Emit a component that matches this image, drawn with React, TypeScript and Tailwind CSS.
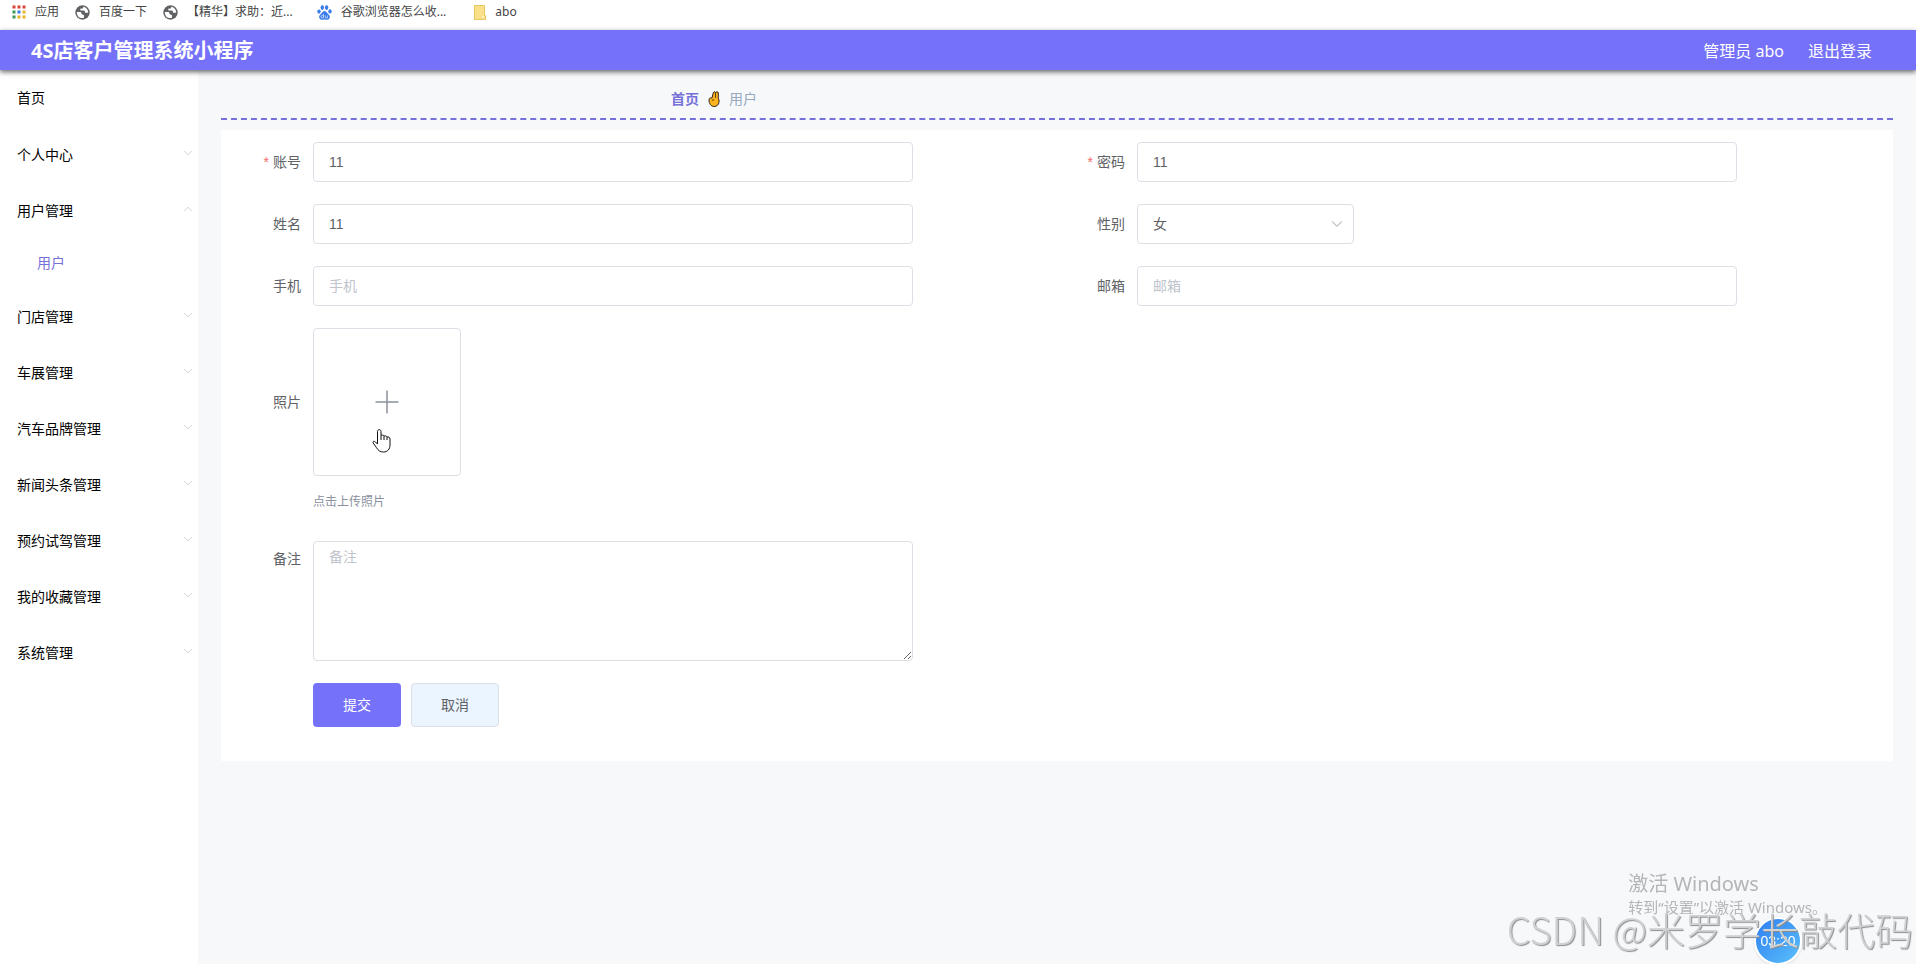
import { useState } from 'react';
import { ChevronDown, ChevronUp } from 'lucide-react';

const bookmarkText = 'ml-[9px] text-xs whitespace-nowrap';

const menu = [
  { name: '个人中心' },
  { name: '用户管理', children: ['用户'] },
  { name: '门店管理' },
  { name: '车展管理' },
  { name: '汽车品牌管理' },
  { name: '新闻头条管理' },
  { name: '预约试驾管理' },
  { name: '我的收藏管理' },
  { name: '系统管理' },
];

const appColors = ['#d9453b', '#d9453b', '#d9453b', '#3c9a55', '#3b7de0', '#e8b424', '#3c9a55', '#e8b424', '#e8b424'];

function AppsIcon() {
  return (
    <svg className="size-[14px]" viewBox="0 0 14 14">
      {appColors.map((color, i) => (
        <rect key={i} x={(i % 3) * 5 + 0.5} y={Math.floor(i / 3) * 5 + 0.5} width="3" height="3" fill={color} />
      ))}
    </svg>
  );
}

function GlobeIcon() {
  return (
    <svg className="size-[15px]" viewBox="0 0 15 15">
      <circle cx="7.5" cy="7.5" r="7.2" fill="#5f6165" />
      <path
        d="M1.800 7h3c1.300 0 1.700.7 1.700 1.600 0 .8.600 1.100 1.400 1.100.900 0 1.100.600 1.100 1.300v1.800c-3.600 1.200-7.400-1.300-7.200-5.800zM8.200 1.800v.900c0 .600-.400.900-1 .900H6.100c-.600 0-.900.400-.900.900 0 .700.400 1 1 1h2.300c.900 0 1.300.500 1.300 1.200 0 .800.500 1.100 1.200 1.100h2.200c0-3.300-2.200-5.600-4.800-6z"
        fill="#fff"
      />
    </svg>
  );
}

function PawIcon() {
  return (
    <svg className="size-[15px]" viewBox="0 0 15 15" fill="#3a7be8">
      <ellipse cx="2" cy="6.600" rx="1.700" ry="2.100" />
      <ellipse cx="5.300" cy="2.600" rx="1.700" ry="2.300" />
      <ellipse cx="9.600" cy="2.600" rx="1.700" ry="2.300" />
      <ellipse cx="13" cy="6.400" rx="1.700" ry="2.100" />
      <path d="M7.500 6c1.500 0 2.200 1.500 3.400 2.700 1.400 1.400 2.400 2.700 1.800 4.200-.600 1.800-2.600 1.900-5.200 1.700-2.600.200-4.600.100-5.200-1.700-.600-1.500.400-2.800 1.800-4.200C5.300 7.500 6 6 7.500 6z" />
      <path
        d="M6.500 9v4H5.200a1.200 1.200 0 0 1 0-2.400h1.300M8.300 10.500v1.700c0 .600.300.800.800.800h1.300v-2.500"
        fill="none"
        stroke="#fff"
        strokeWidth=".6"
      />
    </svg>
  );
}

function FolderIcon() {
  return (
    <svg className="h-[15px] w-3" viewBox="0 0 12 15">
      <path d="M.5.500h10v10h1v4H.5z" fill="#fbe08a" stroke="#e9c65c" />
      <path d="M8.500 13.500v-2h2" fill="none" stroke="#fdf1c4" />
    </svg>
  );
}

function VictoryIcon() {
  return (
    <svg className="h-4 w-3" viewBox="0 0 12 16">
      <path
        d="M1 8.500C1 7.200 2.400 6.600 4 7L5.300 1.800C5.600.400 7.400.500 7.500 1.900 8 .300 10.300.400 10.300 2v5.300c.700 1 .9 2.300.7 3.800-.300 2.700-2.200 4.400-4.900 4.400S1 13.200 1 8.500z"
        fill="#fbb41f"
        stroke="#2f2418"
      />
      <path d="M3.800 9.300l2.400-.5M7.500 2v4.800" fill="none" stroke="#2f2418" strokeWidth=".8" />
    </svg>
  );
}

function HandCursor() {
  return (
    <svg className="h-6 w-[19px]" viewBox="0 0 19 24">
      <path
        d="M5.500 15V2.500C5.500 0 9 0 9 2.500V6.500c1-.900 2.800-.500 3 .700 1-.700 2.700-.300 3 .900 1.500-.600 3 .200 3 1.900v6c0 4-2.500 7-6.500 7-3.500 0-5.200-1.500-7-4.300L1.200 14C.300 12.400 2.200 11.700 3.500 13z"
        fill="#fff"
        stroke="#111"
        strokeLinejoin="round"
      />
      <path d="M9 6.500V11M12 7.200V11M15 8.200V11" stroke="#111" fill="none" />
    </svg>
  );
}

const inputClass =
  'h-10 w-full max-w-[600px] rounded border border-[#dcdfe6] bg-white px-[15px] text-sm text-[#606266] outline-none placeholder:text-[#c0c4cc]';

type FieldProps = {
  id: string;
  label: string;
  required?: boolean;
  value?: string;
};

function Label({ id, label, required }: FieldProps) {
  return (
    <label htmlFor={id} className="w-20 shrink-0 pr-3 text-right text-sm leading-10 text-[#606266]">
      {required && <span className="mr-1 text-[#f56c6c]">*</span>}
      {label}
    </label>
  );
}

function TextField(props: FieldProps) {
  const [value, setValue] = useState(props.value || '');

  return (
    <div className="flex">
      <Label {...props} />
      <input
        id={props.id}
        className={inputClass}
        placeholder={props.label}
        value={value}
        onChange={e => setValue(e.target.value)}
      />
    </div>
  );
}

export default function App() {
  return (
    <div className="flex min-h-screen flex-col bg-[#f6f8fa] font-['Liberation_Sans','Noto_Sans_CJK_SC',sans-serif]">
      <nav className="flex h-[30px] items-start bg-white pt-1 pl-3 font-['Noto_Sans','Noto_Sans_CJK_SC',sans-serif] text-[#444]">
        <a href="#" className="mr-4 flex items-center">
          <AppsIcon />
          <span className={bookmarkText}>应用</span>
        </a>
        <a href="#" className="mr-4 flex items-center">
          <GlobeIcon />
          <span className={bookmarkText}>百度一下</span>
        </a>
        <a href="#" className="mr-6 flex items-center">
          <GlobeIcon />
          <span className={bookmarkText}>【精华】求助：近...</span>
        </a>
        <a href="#" className="mr-7 flex items-center">
          <PawIcon />
          <span className={bookmarkText}>谷歌浏览器怎么收...</span>
        </a>
        <a href="#" className="flex items-center">
          <FolderIcon />
          <span className={bookmarkText}>abo</span>
        </a>
      </nav>

      <header className="z-10 flex h-10 items-center justify-between bg-[#7571f9] pt-[2px] pr-11 pl-[31px] font-['Noto_Sans','Noto_Sans_CJK_SC',sans-serif] text-white shadow-[0_2px_5px_rgba(0,0,0,0.6)]">
        <h1 className="text-xl font-bold">4S店客户管理系统小程序</h1>
        <div className="flex gap-6 text-base">
          <span>管理员 abo</span>
          <a href="#">退出登录</a>
        </div>
      </header>

      <div className="flex flex-1">
        <aside className="w-[198px] shrink-0 bg-white text-sm text-black">
          <a href="#" className="flex h-14 items-center pl-[17px]">
            首页
          </a>
          {menu.map(item => (
            <div key={item.name}>
              <button className="flex h-14 w-full items-center justify-between pt-[2px] pr-[3px] pl-[17px]">
                {item.name}
                {item.children ? (
                  <ChevronUp className="mb-1 size-[14px] text-[#c8cacd]" strokeWidth={1.5} />
                ) : (
                  <ChevronDown className="mb-1 size-[14px] text-[#c8cacd]" strokeWidth={1.5} />
                )}
              </button>
              {item.children?.map(child => (
                <a key={child} href="#" className="flex h-[50px] items-center pl-[37px] text-[#7571d9]">
                  {child}
                </a>
              ))}
            </div>
          ))}
        </aside>

        <main className="flex-1 px-[23px]">
          <div className="flex h-[50px] items-center border-b-2 border-dashed border-[#7571d9] pt-[10px] pl-[450px] text-sm">
            <a href="#" className="font-bold text-[#7571d9]">
              首页
            </a>
            <span className="mx-[9px]">
              <VictoryIcon />
            </span>
            <span className="text-[#97a8be]">用户</span>
          </div>

          <form className="mt-[10px] flex flex-col gap-[22px] bg-white px-3 pt-3 pb-[34px]" onSubmit={e => e.preventDefault()}>
            <div className="grid grid-cols-2 gap-y-[22px]">
              <TextField id="account" label="账号" value="11" required />
              <TextField id="password" label="密码" value="11" required />
              <TextField id="name" label="姓名" value="11" />
              <div className="flex">
                <Label id="gender" label="性别" />
                <div className="relative">
                  <select
                    id="gender"
                    defaultValue="女"
                    className="h-10 w-[217px] appearance-none rounded border border-[#dcdfe6] bg-white px-[15px] text-sm text-[#606266] outline-none"
                  >
                    <option>女</option>
                    <option>男</option>
                  </select>
                  <ChevronDown
                    className="pointer-events-none absolute top-[11px] right-2 size-[18px] text-[#c0c4cc]"
                    strokeWidth={1.5}
                  />
                </div>
              </div>
              <TextField id="phone" label="手机" />
              <TextField id="email" label="邮箱" />
            </div>

            <div className="flex">
              <span className="w-20 shrink-0 pr-3 text-right text-sm leading-[148px] text-[#606266]">照片</span>
              <div>
                <button
                  type="button"
                  aria-label="上传照片"
                  className="relative flex size-[148px] items-center justify-center rounded border border-[#dcdfe6]"
                >
                  <svg className="size-6" viewBox="0 0 24 24" stroke="#8c939d" strokeWidth="1.500">
                    <path d="M12 .500v23M.5 12h23" />
                  </svg>
                  <span className="absolute top-[100px] left-[58px]">
                    <HandCursor />
                  </span>
                </button>
                <p className="mt-4 h-[27px] text-xs leading-5 text-[#8a919e]">点击上传照片</p>
              </div>
            </div>

            <div className="flex">
              <label htmlFor="remark" className="w-20 shrink-0 pr-3 text-right text-sm leading-9 text-[#606266]">
                备注
              </label>
              <textarea
                id="remark"
                placeholder="备注"
                className="h-[120px] w-full max-w-[600px] resize-y rounded border border-[#dcdfe6] px-[15px] py-[5px] text-sm text-[#606266] outline-none placeholder:text-[#c0c4cc]"
              />
            </div>

            <div className="flex gap-[10px] pl-20 text-sm">
              <button type="submit" className="h-11 w-[88px] rounded bg-[#7571f9] text-white">
                提交
              </button>
              <button type="button" className="h-11 w-[88px] rounded border border-[#dcdfe6] bg-[#ebf5ff] text-[#606266]">
                取消
              </button>
            </div>
          </form>
        </main>
      </div>

      <div className="fixed right-[89px] bottom-[46px] font-['Noto_Sans','Noto_Sans_CJK_SC',sans-serif] whitespace-nowrap text-[#b3b5b8]">
        <p className="text-xl leading-6">激活 Windows</p>
        <p className="text-[15px] leading-[22px]">转到“设置”以激活 Windows。</p>
      </div>
      <div className="fixed right-[114px] bottom-[-1px] flex size-12 items-center justify-center rounded-full border-2 border-white bg-linear-to-br from-[#2f7df0] to-[#5cc0fb] text-sm text-white shadow">
        03:20
      </div>
      <div className="fixed right-[3px] bottom-2 font-['Noto_Sans_CJK_SC',sans-serif] text-[38px] leading-[54px] font-light whitespace-nowrap text-[#d0d1d3] [text-shadow:1px_1px_1px_#8c8c8c]">
        CSDN @米罗学长敲代码
      </div>
    </div>
  );
}
